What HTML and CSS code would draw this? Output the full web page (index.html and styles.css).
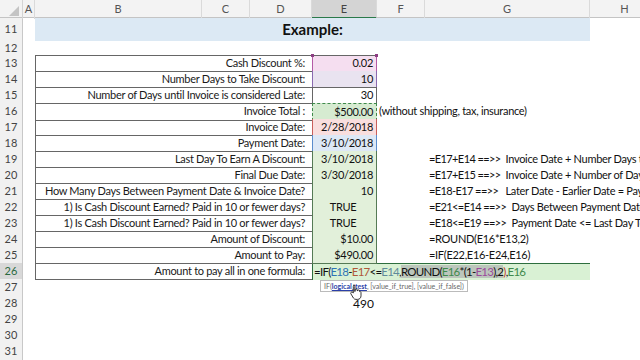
FILE: index.html
```html
<!DOCTYPE html>
<html lang="en">
  <head>
    <meta charset="UTF-8" />
    <title>Cash Discount Example</title>
    <link rel="stylesheet" href="styles.css">
  </head>
  <body>
    <div class="sheet">
      <div class="row head">
        <div class="corner"><span class="tri"></span></div>
        <div class="ch">A</div>
        <div class="ch">B</div>
        <div class="ch">C</div>
        <div class="ch">D</div>
        <div class="ch sel">E</div>
        <div class="ch">F</div>
        <div class="ch">G</div>
        <div class="ch">H</div>
      </div>

      <div class="row r11">
        <div class="rh">11</div>
        <div class="title">Example:</div>
      </div>
      <div class="row r12">
        <div class="rh">12</div>
      </div>

      <div class="row">
        <div class="rh">13</div>
        <div class="label first">Cash Discount %:</div>
        <div class="val first ref-pink">0.02<span class="knob tl"></span><span class="knob tr"></span></div>
      </div>
      <div class="row">
        <div class="rh">14</div>
        <div class="label">Number Days to Take Discount:</div>
        <div class="val ref-purple">10</div>
      </div>
      <div class="row">
        <div class="rh">15</div>
        <div class="label">Number of Days until Invoice is considered Late:</div>
        <div class="val">30</div>
      </div>
      <div class="row">
        <div class="rh">16</div>
        <div class="label">Invoice Total :</div>
        <div class="val ref-green">$500.00</div>
        <div class="aside">(without shipping, tax, insurance)</div>
      </div>
      <div class="row">
        <div class="rh">17</div>
        <div class="label">Invoice Date:</div>
        <div class="val ref-red">2/28/2018</div>
      </div>
      <div class="row">
        <div class="rh">18</div>
        <div class="label">Payment Date:</div>
        <div class="val ref-blue">3/10/2018</div>
      </div>
      <div class="row">
        <div class="rh">19</div>
        <div class="label">Last Day To Earn A Discount:</div>
        <div class="val calc">3/10/2018</div>
        <div class="note"><span class="op">=E17+E14 ==&gt;&gt;</span> Invoice Date + Number Days to Take Discount</div>
      </div>
      <div class="row">
        <div class="rh">20</div>
        <div class="label">Final Due Date:</div>
        <div class="val calc">3/30/2018</div>
        <div class="note"><span class="op">=E17+E15 ==&gt;&gt;</span> Invoice Date + Number of Days until Late</div>
      </div>
      <div class="row">
        <div class="rh">21</div>
        <div class="label">How Many Days Between Payment Date &amp; Invoice Date?</div>
        <div class="val calc">10</div>
        <div class="note"><span class="op">=E18-E17 ==&gt;&gt;</span> Later Date - Earlier Date = Payment Days</div>
      </div>
      <div class="row">
        <div class="rh">22</div>
        <div class="label">1) Is Cash Discount Earned? Paid in 10 or fewer days?</div>
        <div class="val calc mid">TRUE</div>
        <div class="note"><span class="op wide">=E21&lt;=E14 ==&gt;&gt;</span> Days Between Payment Date &lt;= Discount Days</div>
      </div>
      <div class="row">
        <div class="rh">23</div>
        <div class="label">1) Is Cash Discount Earned? Paid in 10 or fewer days?</div>
        <div class="val calc mid">TRUE</div>
        <div class="note"><span class="op wide">=E18&lt;=E19 ==&gt;&gt;</span> Payment Date &lt;= Last Day To Earn</div>
      </div>
      <div class="row">
        <div class="rh">24</div>
        <div class="label">Amount of Discount:</div>
        <div class="val calc">$10.00</div>
        <div class="note">=ROUND(E16*E13,2)</div>
      </div>
      <div class="row">
        <div class="rh">25</div>
        <div class="label">Amount to Pay:</div>
        <div class="val calc">$490.00</div>
        <div class="note">=IF(E22,E16-E24,E16)</div>
      </div>
      <div class="row">
        <div class="rh cur">26</div>
        <div class="label">Amount to pay all in one formula:</div>
        <div class="edit">=IF(<span class="c-blue">E18</span>-<span class="c-red">E17</span>&lt;=<span class="c-purple">E14</span>,<span class="hl">ROUND(<span class="c-green">E16</span>*(1-<span class="c-pink">E13</span>),2</span><span class="c-paren">)</span>,<span class="c-green">E16</span></div>
      </div>
      <div class="row">
        <div class="rh">27</div>
      </div>
      <div class="row">
        <div class="rh">28</div>
        <div class="val plain">490</div>
      </div>
      <div class="row"><div class="rh">29</div></div>
      <div class="row"><div class="rh">30</div></div>
      <div class="row"><div class="rh">31</div></div>
      <div class="row"><div class="rh">32</div></div>

      <div class="tip">IF(<b>logical_test</b>, [value_if_true], [value_if_false])</div>
      <svg class="hand" width="12" height="16" viewBox="0 0 12 16">
        <path d="M3.5 1.2c.8 0 1.3.5 1.3 1.3v5l.3-.1V6c0-.7.5-1.1 1.1-1.1s1.1.4 1.1 1.1v1l.2-.1c0-.6.5-1 1.1-1s1 .5 1 1.1v.6c.6-.2 1.4.2 1.4 1v3.2c0 2-1.3 3.6-3.4 3.6H6c-1.1 0-2-.5-2.6-1.4L.9 9.8c-.4-.6-.2-1.3.4-1.6.5-.3 1.1-.1 1.5.3l.5.6V2.5c0-.8.5-1.3 1.2-1.3z" fill="#fff" stroke="#222" stroke-width=".9"/>
      </svg>
    </div>
  </body>
</html>
```

FILE: styles.css
```css
body {
  margin: 0;
  background: #fff;
  overflow: hidden;
  font-family: Lato, "Open Sans", sans-serif;
  color: #111;
}

.sheet {
  position: relative;
  width: 640px;
  height: 360px;
  overflow: hidden;
}

.row {
  display: grid;
  grid-template-columns: 23px 12px 167px 48px 62px 65px 48px 165px 70px;
  height: 16px;
  font-size: 11px;
  line-height: 16px;
  letter-spacing: -0.3px;
}

.row > div {
  white-space: nowrap;
  box-sizing: border-box;
}

/* column headers */
.head {
  height: 18px;
  line-height: 17px;
  background: #f3f3f3;
  border-bottom: 1px solid #c4c4c4;
  box-sizing: border-box;
  letter-spacing: 0;
}

.corner {
  position: relative;
  border-right: 1px solid #d4d4d4;
}

.tri {
  position: absolute;
  right: 3px;
  bottom: 3px;
  border-left: 10px solid transparent;
  border-bottom: 10px solid #c4c4c4;
}

.ch {
  text-align: center;
  color: #555;
  font-size: 11px;
  border-right: 1px solid #dadada;
}

.ch.sel {
  background: #d4d4d4;
  border-bottom: 2px solid #2a7a4a;
  color: #444;
}

/* row headers */
.rh {
  grid-column: 1;
  background: #f1f1f1;
  border-right: 1px solid #c8c8c8;
  border-bottom: 1px solid #e0e0e0;
  color: #444;
  text-align: center;
  font-size: 11px;
  letter-spacing: 0;
}

.rh.cur {
  background: #d8d8d8;
  color: #2a6a40;
}

.r11 {
  height: 22px;
  line-height: 22px;
}

.r12 {
  height: 15px;
  line-height: 15px;
}

.title {
  grid-column: 3 / 9;
  background: #dce9f4;
  text-align: center;
  font-weight: bold;
  font-size: 15px;
  letter-spacing: 0;
}

/* table */
.label {
  grid-column: 3 / 6;
  text-align: right;
  padding-right: 7px;
  border-left: 1px solid #666;
  border-bottom: 1px solid #666;
  color: #1a1a1a;
}

.label.first,
.val.first {
  border-top: 1px solid #666;
  line-height: 14px;
}

.val {
  grid-column: 6;
  position: relative;
  text-align: right;
  padding-right: 3px;
  border-left: 1px solid #666;
  border-right: 1px solid #666;
  border-bottom: 1px solid #666;
}

.val.mid {
  text-align: center;
}

.val.plain {
  border: none;
  font-size: 12px;
  line-height: 18px;
  letter-spacing: 0;
}

.ref-pink {
  background: #f5def0;
  border-color: #b45aa6;
}

.ref-purple {
  background: #e9e3f0;
  border-left-color: #8a6ab0;
  border-right-color: #8a6ab0;
}

.ref-green {
  background: #d6ebd1;
  border: 1px dashed #3f8a4c;
}

.ref-red {
  background: #f9dede;
  border-color: #c9605c;
}

.ref-blue {
  background: #dde8f6;
  border-color: #5b8ccc;
}

.calc {
  background: #e2f0da;
  border-color: #557a55;
}

.knob {
  position: absolute;
  top: -2px;
  width: 3px;
  height: 3px;
  background: #8c3d82;
}

.knob.tl {
  left: -2px;
}

.knob.tr {
  right: -2px;
}

.aside {
  grid-column: 7 / 10;
  padding-left: 2px;
}

.note {
  grid-column: 8 / 10;
  padding-left: 4px;
}

.note .op {
  display: inline-block;
  width: 74px;
  letter-spacing: -0.6px;
}

.note .op.wide {
  width: 80px;
}

/* cell being edited */
.edit {
  grid-column: 6 / 9;
  background: #d9f1d4;
  border-left: 1px solid #2d6e3e;
  border-top: 1px solid #2d6e3e;
  font-size: 11.5px;
  line-height: 15px;
  padding-left: 1px;
  letter-spacing: -0.75px;
}

.hl {
  background: #bcc6bc;
}

.c-blue { color: #2e74b5; }
.c-red { color: #b0583a; }
.c-purple { color: #5f8a9a; }
.c-green { color: #3f8a4c; }
.c-pink { color: #9b4a9b; }
.c-paren { color: #c0392b; }

.tip {
  position: absolute;
  left: 320px;
  top: 280px;
  padding: 0 3px;
  height: 10px;
  line-height: 10px;
  font-size: 7px;
  color: #666;
  background: #fff;
  border: 1px solid #bbb;
  white-space: nowrap;
}

.tip b {
  color: #2b3fa8;
  text-decoration: underline;
}

.hand {
  position: absolute;
  left: 350px;
  top: 284px;
}
```
